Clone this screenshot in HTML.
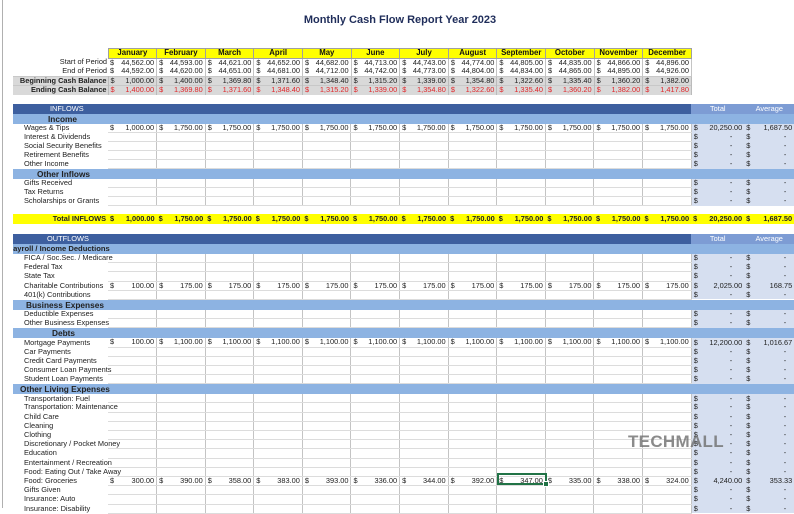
<!DOCTYPE html>
<html><head><meta charset="utf-8">
<style>
body{margin:0;width:794px;height:508px;overflow:hidden;background:#fff;font-family:"Liberation Sans",Arial,sans-serif;font-size:7.4px;color:#222;position:relative}
.vl{position:absolute;left:2px;top:0;width:1px;height:508px;background:#b0b0b0}
.title{position:absolute;left:0;width:800px;top:14px;text-align:center;font-size:11px;font-weight:bold;color:#1f2d5a}
table{position:absolute;left:13px;border-collapse:collapse;table-layout:fixed;width:781px}
td{padding:0 2px;white-space:nowrap;overflow:hidden;height:8px;line-height:8px;text-align:right}
i{float:left;font-style:normal}
td.l{overflow:visible;padding-left:11px;text-align:left}
td.m{border-right:1px solid #c4c4c4;border-bottom:1px solid #dcdcdc}
td.t,td.a{background:#d6dff0}
td.t b,td.a b{font-weight:normal}
td.t b{padding-right:10px}
td.a b{padding-right:6px}
tr.lb td{background:#8db3e2;font-weight:bold;font-size:8.3px;text-align:left;height:10px;line-height:10px}
tr.db td{background:#3d5f9f;color:#fff;text-align:left;height:10px;line-height:10px}
tr.db td.h{background:#7d9cd4;text-align:center}
tr.o td{height:8.2px;line-height:8.2px}
.top td{height:8.5px;line-height:8.5px}
.top td.hd{background:#ffff00;font-weight:bold;text-align:center;border:1px solid #a0a0a0;font-size:7.8px;color:#111}
.top td.v{border-right:1px solid #c4c4c4}
.top tr.g td{background:#d9d9d9;border-right:1px solid #bbb;border-top:1px solid #c8c8c8}
.top tr.g td.lab{font-weight:bold}
.top tr.r td.v{color:#e0262a}
.top td.lab{text-align:right;padding-right:1px;overflow:visible}
.tot td{background:#ffff00;font-weight:bold;height:10px;line-height:10px}
.wm{position:absolute;left:628px;top:432px;font-size:17px;font-weight:bold;color:rgba(110,110,110,.8);letter-spacing:0.3px}
.sel{position:absolute;left:497px;top:473px;width:46px;height:8px;border:2px solid #217346}
.sel:after{content:"";position:absolute;right:-4px;bottom:-4px;width:4px;height:4px;background:#217346;border:1px solid #fff}
</style></head><body>
<div class="vl"></div>
<div class="title">Monthly Cash Flow Report Year 2023</div>

<table class="top" style="top:48px;width:679px">
<colgroup><col style="width:95px"><col span="12" style="width:48.6px"></colgroup>
<tr><td></td><td class="hd">January</td><td class="hd">February</td><td class="hd">March</td><td class="hd">April</td><td class="hd">May</td><td class="hd">June</td><td class="hd">July</td><td class="hd">August</td><td class="hd">September</td><td class="hd">October</td><td class="hd">November</td><td class="hd">December</td></tr>
<tr><td class="lab">Start of Period</td><td class="v"><i>$</i>44,562.00</td><td class="v"><i>$</i>44,593.00</td><td class="v"><i>$</i>44,621.00</td><td class="v"><i>$</i>44,652.00</td><td class="v"><i>$</i>44,682.00</td><td class="v"><i>$</i>44,713.00</td><td class="v"><i>$</i>44,743.00</td><td class="v"><i>$</i>44,774.00</td><td class="v"><i>$</i>44,805.00</td><td class="v"><i>$</i>44,835.00</td><td class="v"><i>$</i>44,866.00</td><td class="v"><i>$</i>44,896.00</td></tr>
<tr><td class="lab">End of Period</td><td class="v"><i>$</i>44,592.00</td><td class="v"><i>$</i>44,620.00</td><td class="v"><i>$</i>44,651.00</td><td class="v"><i>$</i>44,681.00</td><td class="v"><i>$</i>44,712.00</td><td class="v"><i>$</i>44,742.00</td><td class="v"><i>$</i>44,773.00</td><td class="v"><i>$</i>44,804.00</td><td class="v"><i>$</i>44,834.00</td><td class="v"><i>$</i>44,865.00</td><td class="v"><i>$</i>44,895.00</td><td class="v"><i>$</i>44,926.00</td></tr>
<tr class="g"><td class="lab">Beginning Cash Balance</td><td class="v"><i>$</i>1,000.00</td><td class="v"><i>$</i>1,400.00</td><td class="v"><i>$</i>1,369.80</td><td class="v"><i>$</i>1,371.60</td><td class="v"><i>$</i>1,348.40</td><td class="v"><i>$</i>1,315.20</td><td class="v"><i>$</i>1,339.00</td><td class="v"><i>$</i>1,354.80</td><td class="v"><i>$</i>1,322.60</td><td class="v"><i>$</i>1,335.40</td><td class="v"><i>$</i>1,360.20</td><td class="v"><i>$</i>1,382.00</td></tr>
<tr class="g r"><td class="lab">Ending Cash Balance</td><td class="v"><i>$</i>1,400.00</td><td class="v"><i>$</i>1,369.80</td><td class="v"><i>$</i>1,371.60</td><td class="v"><i>$</i>1,348.40</td><td class="v"><i>$</i>1,315.20</td><td class="v"><i>$</i>1,339.00</td><td class="v"><i>$</i>1,354.80</td><td class="v"><i>$</i>1,322.60</td><td class="v"><i>$</i>1,335.40</td><td class="v"><i>$</i>1,360.20</td><td class="v"><i>$</i>1,382.00</td><td class="v"><i>$</i>1,417.80</td></tr>
</table>

<table style="top:104px">
<colgroup><col style="width:95px"><col span="12" style="width:48.6px"><col style="width:53px"><col style="width:50px"></colgroup>
<tr class="db"><td colspan="13" style="padding-left:37px">INFLOWS</td><td class="h">Total</td><td class="h">Average</td></tr>
<tr class="lb"><td colspan="15" style="padding-left:35px">Income</td></tr>
<tr><td class="l">Wages &amp; Tips</td><td class="m"><i>$</i>1,000.00</td><td class="m"><i>$</i>1,750.00</td><td class="m"><i>$</i>1,750.00</td><td class="m"><i>$</i>1,750.00</td><td class="m"><i>$</i>1,750.00</td><td class="m"><i>$</i>1,750.00</td><td class="m"><i>$</i>1,750.00</td><td class="m"><i>$</i>1,750.00</td><td class="m"><i>$</i>1,750.00</td><td class="m"><i>$</i>1,750.00</td><td class="m"><i>$</i>1,750.00</td><td class="m"><i>$</i>1,750.00</td><td class="t"><i>$</i>20,250.00</td><td class="a"><i>$</i>1,687.50</td></tr>
<tr><td class="l">Interest &amp; Dividends</td><td class="m"></td><td class="m"></td><td class="m"></td><td class="m"></td><td class="m"></td><td class="m"></td><td class="m"></td><td class="m"></td><td class="m"></td><td class="m"></td><td class="m"></td><td class="m"></td><td class="t"><i>$</i><b>-</b></td><td class="a"><i>$</i><b>-</b></td></tr>
<tr><td class="l">Social Security Benefits</td><td class="m"></td><td class="m"></td><td class="m"></td><td class="m"></td><td class="m"></td><td class="m"></td><td class="m"></td><td class="m"></td><td class="m"></td><td class="m"></td><td class="m"></td><td class="m"></td><td class="t"><i>$</i><b>-</b></td><td class="a"><i>$</i><b>-</b></td></tr>
<tr><td class="l">Retirement Benefits</td><td class="m"></td><td class="m"></td><td class="m"></td><td class="m"></td><td class="m"></td><td class="m"></td><td class="m"></td><td class="m"></td><td class="m"></td><td class="m"></td><td class="m"></td><td class="m"></td><td class="t"><i>$</i><b>-</b></td><td class="a"><i>$</i><b>-</b></td></tr>
<tr><td class="l">Other Income</td><td class="m"></td><td class="m"></td><td class="m"></td><td class="m"></td><td class="m"></td><td class="m"></td><td class="m"></td><td class="m"></td><td class="m"></td><td class="m"></td><td class="m"></td><td class="m"></td><td class="t"><i>$</i><b>-</b></td><td class="a"><i>$</i><b>-</b></td></tr>
<tr class="lb"><td colspan="15" style="padding-left:24px">Other Inflows</td></tr>
<tr><td class="l">Gifts Received</td><td class="m"></td><td class="m"></td><td class="m"></td><td class="m"></td><td class="m"></td><td class="m"></td><td class="m"></td><td class="m"></td><td class="m"></td><td class="m"></td><td class="m"></td><td class="m"></td><td class="t"><i>$</i><b>-</b></td><td class="a"><i>$</i><b>-</b></td></tr>
<tr><td class="l">Tax Returns</td><td class="m"></td><td class="m"></td><td class="m"></td><td class="m"></td><td class="m"></td><td class="m"></td><td class="m"></td><td class="m"></td><td class="m"></td><td class="m"></td><td class="m"></td><td class="m"></td><td class="t"><i>$</i><b>-</b></td><td class="a"><i>$</i><b>-</b></td></tr>
<tr><td class="l">Scholarships or Grants</td><td class="m"></td><td class="m"></td><td class="m"></td><td class="m"></td><td class="m"></td><td class="m"></td><td class="m"></td><td class="m"></td><td class="m"></td><td class="m"></td><td class="m"></td><td class="m"></td><td class="t"><i>$</i><b>-</b></td><td class="a"><i>$</i><b>-</b></td></tr>
</table>

<table class="tot" style="top:214px">
<colgroup><col style="width:95px"><col span="12" style="width:48.6px"><col style="width:53px"><col style="width:50px"></colgroup>
<tr><td>Total INFLOWS</td><td><i>$</i>1,000.00</td><td><i>$</i>1,750.00</td><td><i>$</i>1,750.00</td><td><i>$</i>1,750.00</td><td><i>$</i>1,750.00</td><td><i>$</i>1,750.00</td><td><i>$</i>1,750.00</td><td><i>$</i>1,750.00</td><td><i>$</i>1,750.00</td><td><i>$</i>1,750.00</td><td><i>$</i>1,750.00</td><td><i>$</i>1,750.00</td><td><i>$</i>20,250.00</td><td><i>$</i>1,687.50</td></tr>
</table>

<table style="top:234px">
<colgroup><col style="width:95px"><col span="12" style="width:48.6px"><col style="width:53px"><col style="width:50px"></colgroup>
<tr class="db"><td colspan="13" style="padding-left:34px">OUTFLOWS</td><td class="h">Total</td><td class="h">Average</td></tr>
<tr class="lb"><td colspan="15" style="padding-left:0"><div style="width:97px;overflow:hidden;text-indent:-5px;font-size:7.6px">Payroll / Income Deductions</div></td></tr>
<tr class="o"><td class="l">FICA / Soc.Sec. / Medicare</td><td class="m"></td><td class="m"></td><td class="m"></td><td class="m"></td><td class="m"></td><td class="m"></td><td class="m"></td><td class="m"></td><td class="m"></td><td class="m"></td><td class="m"></td><td class="m"></td><td class="t"><i>$</i><b>-</b></td><td class="a"><i>$</i><b>-</b></td></tr>
<tr class="o"><td class="l">Federal Tax</td><td class="m"></td><td class="m"></td><td class="m"></td><td class="m"></td><td class="m"></td><td class="m"></td><td class="m"></td><td class="m"></td><td class="m"></td><td class="m"></td><td class="m"></td><td class="m"></td><td class="t"><i>$</i><b>-</b></td><td class="a"><i>$</i><b>-</b></td></tr>
<tr class="o"><td class="l">State Tax</td><td class="m"></td><td class="m"></td><td class="m"></td><td class="m"></td><td class="m"></td><td class="m"></td><td class="m"></td><td class="m"></td><td class="m"></td><td class="m"></td><td class="m"></td><td class="m"></td><td class="t"><i>$</i><b>-</b></td><td class="a"><i>$</i><b>-</b></td></tr>
<tr class="o"><td class="l">Charitable Contributions</td><td class="m"><i>$</i>100.00</td><td class="m"><i>$</i>175.00</td><td class="m"><i>$</i>175.00</td><td class="m"><i>$</i>175.00</td><td class="m"><i>$</i>175.00</td><td class="m"><i>$</i>175.00</td><td class="m"><i>$</i>175.00</td><td class="m"><i>$</i>175.00</td><td class="m"><i>$</i>175.00</td><td class="m"><i>$</i>175.00</td><td class="m"><i>$</i>175.00</td><td class="m"><i>$</i>175.00</td><td class="t"><i>$</i>2,025.00</td><td class="a"><i>$</i>168.75</td></tr>
<tr class="o"><td class="l">401(k) Contributions</td><td class="m"></td><td class="m"></td><td class="m"></td><td class="m"></td><td class="m"></td><td class="m"></td><td class="m"></td><td class="m"></td><td class="m"></td><td class="m"></td><td class="m"></td><td class="m"></td><td class="t"><i>$</i><b>-</b></td><td class="a"><i>$</i><b>-</b></td></tr>
<tr class="lb"><td colspan="15" style="padding-left:13px">Business Expenses</td></tr>
<tr class="o"><td class="l">Deductible Expenses</td><td class="m"></td><td class="m"></td><td class="m"></td><td class="m"></td><td class="m"></td><td class="m"></td><td class="m"></td><td class="m"></td><td class="m"></td><td class="m"></td><td class="m"></td><td class="m"></td><td class="t"><i>$</i><b>-</b></td><td class="a"><i>$</i><b>-</b></td></tr>
<tr class="o"><td class="l">Other Business Expenses</td><td class="m"></td><td class="m"></td><td class="m"></td><td class="m"></td><td class="m"></td><td class="m"></td><td class="m"></td><td class="m"></td><td class="m"></td><td class="m"></td><td class="m"></td><td class="m"></td><td class="t"><i>$</i><b>-</b></td><td class="a"><i>$</i><b>-</b></td></tr>
<tr class="lb"><td colspan="15" style="padding-left:39px">Debts</td></tr>
<tr class="o"><td class="l">Mortgage Payments</td><td class="m"><i>$</i>100.00</td><td class="m"><i>$</i>1,100.00</td><td class="m"><i>$</i>1,100.00</td><td class="m"><i>$</i>1,100.00</td><td class="m"><i>$</i>1,100.00</td><td class="m"><i>$</i>1,100.00</td><td class="m"><i>$</i>1,100.00</td><td class="m"><i>$</i>1,100.00</td><td class="m"><i>$</i>1,100.00</td><td class="m"><i>$</i>1,100.00</td><td class="m"><i>$</i>1,100.00</td><td class="m"><i>$</i>1,100.00</td><td class="t"><i>$</i>12,200.00</td><td class="a"><i>$</i>1,016.67</td></tr>
<tr class="o"><td class="l">Car Payments</td><td class="m"></td><td class="m"></td><td class="m"></td><td class="m"></td><td class="m"></td><td class="m"></td><td class="m"></td><td class="m"></td><td class="m"></td><td class="m"></td><td class="m"></td><td class="m"></td><td class="t"><i>$</i><b>-</b></td><td class="a"><i>$</i><b>-</b></td></tr>
<tr class="o"><td class="l">Credit Card Payments</td><td class="m"></td><td class="m"></td><td class="m"></td><td class="m"></td><td class="m"></td><td class="m"></td><td class="m"></td><td class="m"></td><td class="m"></td><td class="m"></td><td class="m"></td><td class="m"></td><td class="t"><i>$</i><b>-</b></td><td class="a"><i>$</i><b>-</b></td></tr>
<tr class="o"><td class="l">Consumer Loan Payments</td><td class="m"></td><td class="m"></td><td class="m"></td><td class="m"></td><td class="m"></td><td class="m"></td><td class="m"></td><td class="m"></td><td class="m"></td><td class="m"></td><td class="m"></td><td class="m"></td><td class="t"><i>$</i><b>-</b></td><td class="a"><i>$</i><b>-</b></td></tr>
<tr class="o"><td class="l">Student Loan Payments</td><td class="m"></td><td class="m"></td><td class="m"></td><td class="m"></td><td class="m"></td><td class="m"></td><td class="m"></td><td class="m"></td><td class="m"></td><td class="m"></td><td class="m"></td><td class="m"></td><td class="t"><i>$</i><b>-</b></td><td class="a"><i>$</i><b>-</b></td></tr>
<tr class="lb"><td colspan="15" style="padding-left:7px">Other Living Expenses</td></tr>
<tr class="o"><td class="l">Transportation: Fuel</td><td class="m"></td><td class="m"></td><td class="m"></td><td class="m"></td><td class="m"></td><td class="m"></td><td class="m"></td><td class="m"></td><td class="m"></td><td class="m"></td><td class="m"></td><td class="m"></td><td class="t"><i>$</i><b>-</b></td><td class="a"><i>$</i><b>-</b></td></tr>
<tr class="o"><td class="l">Transportation: Maintenance</td><td class="m"></td><td class="m"></td><td class="m"></td><td class="m"></td><td class="m"></td><td class="m"></td><td class="m"></td><td class="m"></td><td class="m"></td><td class="m"></td><td class="m"></td><td class="m"></td><td class="t"><i>$</i><b>-</b></td><td class="a"><i>$</i><b>-</b></td></tr>
<tr class="o"><td class="l">Child Care</td><td class="m"></td><td class="m"></td><td class="m"></td><td class="m"></td><td class="m"></td><td class="m"></td><td class="m"></td><td class="m"></td><td class="m"></td><td class="m"></td><td class="m"></td><td class="m"></td><td class="t"><i>$</i><b>-</b></td><td class="a"><i>$</i><b>-</b></td></tr>
<tr class="o"><td class="l">Cleaning</td><td class="m"></td><td class="m"></td><td class="m"></td><td class="m"></td><td class="m"></td><td class="m"></td><td class="m"></td><td class="m"></td><td class="m"></td><td class="m"></td><td class="m"></td><td class="m"></td><td class="t"><i>$</i><b>-</b></td><td class="a"><i>$</i><b>-</b></td></tr>
<tr class="o"><td class="l">Clothing</td><td class="m"></td><td class="m"></td><td class="m"></td><td class="m"></td><td class="m"></td><td class="m"></td><td class="m"></td><td class="m"></td><td class="m"></td><td class="m"></td><td class="m"></td><td class="m"></td><td class="t"><i>$</i><b>-</b></td><td class="a"><i>$</i><b>-</b></td></tr>
<tr class="o"><td class="l">Discretionary / Pocket Money</td><td class="m"></td><td class="m"></td><td class="m"></td><td class="m"></td><td class="m"></td><td class="m"></td><td class="m"></td><td class="m"></td><td class="m"></td><td class="m"></td><td class="m"></td><td class="m"></td><td class="t"><i>$</i><b>-</b></td><td class="a"><i>$</i><b>-</b></td></tr>
<tr class="o"><td class="l">Education</td><td class="m"></td><td class="m"></td><td class="m"></td><td class="m"></td><td class="m"></td><td class="m"></td><td class="m"></td><td class="m"></td><td class="m"></td><td class="m"></td><td class="m"></td><td class="m"></td><td class="t"><i>$</i><b>-</b></td><td class="a"><i>$</i><b>-</b></td></tr>
<tr class="o"><td class="l">Entertainment / Recreation</td><td class="m"></td><td class="m"></td><td class="m"></td><td class="m"></td><td class="m"></td><td class="m"></td><td class="m"></td><td class="m"></td><td class="m"></td><td class="m"></td><td class="m"></td><td class="m"></td><td class="t"><i>$</i><b>-</b></td><td class="a"><i>$</i><b>-</b></td></tr>
<tr class="o"><td class="l">Food: Eating Out / Take Away</td><td class="m"></td><td class="m"></td><td class="m"></td><td class="m"></td><td class="m"></td><td class="m"></td><td class="m"></td><td class="m"></td><td class="m"></td><td class="m"></td><td class="m"></td><td class="m"></td><td class="t"><i>$</i><b>-</b></td><td class="a"><i>$</i><b>-</b></td></tr>
<tr class="o"><td class="l">Food: Groceries</td><td class="m"><i>$</i>300.00</td><td class="m"><i>$</i>390.00</td><td class="m"><i>$</i>358.00</td><td class="m"><i>$</i>383.00</td><td class="m"><i>$</i>393.00</td><td class="m"><i>$</i>336.00</td><td class="m"><i>$</i>344.00</td><td class="m"><i>$</i>392.00</td><td class="m"><i>$</i>347.00</td><td class="m"><i>$</i>335.00</td><td class="m"><i>$</i>338.00</td><td class="m"><i>$</i>324.00</td><td class="t"><i>$</i>4,240.00</td><td class="a"><i>$</i>353.33</td></tr>
<tr class="o"><td class="l">Gifts Given</td><td class="m"></td><td class="m"></td><td class="m"></td><td class="m"></td><td class="m"></td><td class="m"></td><td class="m"></td><td class="m"></td><td class="m"></td><td class="m"></td><td class="m"></td><td class="m"></td><td class="t"><i>$</i><b>-</b></td><td class="a"><i>$</i><b>-</b></td></tr>
<tr class="o"><td class="l">Insurance: Auto</td><td class="m"></td><td class="m"></td><td class="m"></td><td class="m"></td><td class="m"></td><td class="m"></td><td class="m"></td><td class="m"></td><td class="m"></td><td class="m"></td><td class="m"></td><td class="m"></td><td class="t"><i>$</i><b>-</b></td><td class="a"><i>$</i><b>-</b></td></tr>
<tr class="o"><td class="l">Insurance: Disability</td><td class="m"></td><td class="m"></td><td class="m"></td><td class="m"></td><td class="m"></td><td class="m"></td><td class="m"></td><td class="m"></td><td class="m"></td><td class="m"></td><td class="m"></td><td class="m"></td><td class="t"><i>$</i><b>-</b></td><td class="a"><i>$</i><b>-</b></td></tr>
</table>

<div class="sel"></div>
<div class="wm">TECHMALL</div>
</body></html>
